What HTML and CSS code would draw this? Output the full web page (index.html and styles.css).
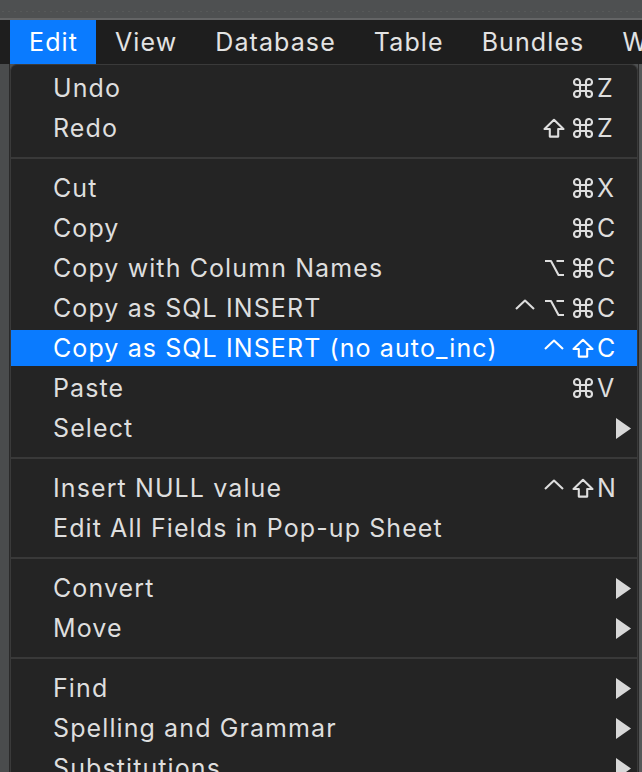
FILE: index.html
```html
<!DOCTYPE html>
<html>
<head>
<meta charset="utf-8">
<link rel="stylesheet" href="styles.css">
</head>
<body>
<svg class="defs" width="0" height="0" aria-hidden="true">
  <defs>
    <symbol id="cmd" viewBox="0 0 24 20"><path d="M15 4v12a3 3 0 1 0 3-3H6a3 3 0 1 0 3 3V4a3 3 0 1 0-3 3h12a3 3 0 1 0-3-3"/></symbol>
    <symbol id="shift" viewBox="0 0 24 20"><polygon points="12,1.8 21.5,11 16.2,11 16.2,18.6 7.8,18.6 7.8,11 2.5,11"/></symbol>
    <symbol id="opt" viewBox="0 0 24 20"><path d="M3 3h6l7.5 14H22M14.5 3H22"/></symbol>
    <symbol id="ctrl" viewBox="0 0 24 20"><path d="M3 11L12 2.5l9 8.5"/></symbol>
    <symbol id="arrow" viewBox="0 0 15 21"><polygon points="0,0 15,10.5 0,21"/></symbol>
  </defs>
</svg>
<div class="screen">
  <div class="titlebar"></div>
  <div class="menubar">
    <span class="mb-item active">Edit</span>
    <span class="mb-item">View</span>
    <span class="mb-item">Database</span>
    <span class="mb-item">Table</span>
    <span class="mb-item">Bundles</span>
    <span class="mb-item">Window</span>
  </div>
  <div class="stage">
    <div class="desk-left"></div>
    <div class="menu">
      <div class="item"><span class="label">Undo</span><span class="sc"><span class="mods"><svg class="mod"><use href="#cmd"/></svg></span><span class="key">Z</span></span></div>
      <div class="item"><span class="label">Redo</span><span class="sc"><span class="mods"><svg class="mod"><use href="#shift"/></svg><svg class="mod"><use href="#cmd"/></svg></span><span class="key">Z</span></span></div>
      <div class="sep"></div>
      <div class="item"><span class="label">Cut</span><span class="sc"><span class="mods"><svg class="mod"><use href="#cmd"/></svg></span><span class="key">X</span></span></div>
      <div class="item"><span class="label">Copy</span><span class="sc"><span class="mods"><svg class="mod"><use href="#cmd"/></svg></span><span class="key">C</span></span></div>
      <div class="item"><span class="label">Copy with Column Names</span><span class="sc"><span class="mods"><svg class="mod"><use href="#opt"/></svg><svg class="mod"><use href="#cmd"/></svg></span><span class="key">C</span></span></div>
      <div class="item"><span class="label">Copy as SQL INSERT</span><span class="sc"><span class="mods"><svg class="mod"><use href="#ctrl"/></svg><svg class="mod"><use href="#opt"/></svg><svg class="mod"><use href="#cmd"/></svg></span><span class="key">C</span></span></div>
      <div class="item hl"><span class="label">Copy as SQL INSERT (no auto_inc)</span><span class="sc"><span class="mods"><svg class="mod"><use href="#ctrl"/></svg><svg class="mod"><use href="#shift"/></svg></span><span class="key">C</span></span></div>
      <div class="item"><span class="label">Paste</span><span class="sc"><span class="mods"><svg class="mod"><use href="#cmd"/></svg></span><span class="key">V</span></span></div>
      <div class="item"><span class="label">Select</span><svg class="arrow"><use href="#arrow"/></svg></div>
      <div class="sep"></div>
      <div class="item"><span class="label">Insert NULL value</span><span class="sc"><span class="mods"><svg class="mod"><use href="#ctrl"/></svg><svg class="mod"><use href="#shift"/></svg></span><span class="key">N</span></span></div>
      <div class="item"><span class="label">Edit All Fields in Pop-up Sheet</span></div>
      <div class="sep"></div>
      <div class="item"><span class="label">Convert</span><svg class="arrow"><use href="#arrow"/></svg></div>
      <div class="item"><span class="label">Move</span><svg class="arrow"><use href="#arrow"/></svg></div>
      <div class="sep"></div>
      <div class="item"><span class="label">Find</span><svg class="arrow"><use href="#arrow"/></svg></div>
      <div class="item"><span class="label">Spelling and Grammar</span><svg class="arrow"><use href="#arrow"/></svg></div>
      <div class="item"><span class="label">Substitutions</span><svg class="arrow"><use href="#arrow"/></svg></div>
    </div>
    <div class="desk-right"></div>
  </div>
</div>
</body>
</html>
```
FILE: styles.css
```css
html, body {
  margin: 0;
  padding: 0;
  background: #4d4f50;
}
.defs {
  position: absolute;
  width: 0;
  height: 0;
  overflow: hidden;
}
.screen {
  width: 642px;
  height: 772px;
  overflow: hidden;
  display: flex;
  flex-direction: column;
  font-family: Inter, "Noto Sans", "DejaVu Sans", sans-serif;
}
.titlebar {
  height: 18px;
  flex-shrink: 0;
  background-color: #4e5051;
  background-image: radial-gradient(circle, #575959 0.8px, transparent 1px);
  background-size: 6px 5px;
  background-position: 0 9px;
  background-repeat: repeat-x;
  border-bottom: 2px solid #646566;
}
.menubar {
  height: 44px;
  flex-shrink: 0;
  background: #1e1e1e;
  display: flex;
  padding-left: 10px;
  white-space: nowrap;
  overflow: hidden;
}
.mb-item {
  padding: 0 19px 0 19px;
  line-height: 45px;
  font-size: 25px;
  letter-spacing: 1.1px;
  color: #e3e3e3;
}
.mb-item.active {
  padding-right: 18px;
  background: #0a7bff;
  color: #ffffff;
}
.stage {
  flex: 1;
  display: flex;
  min-height: 0;
}
.desk-left {
  width: 10px;
  flex-shrink: 0;
  background: #4a4c4d;
  box-shadow: inset -1px 0 0 #2a2a2a;
}
.desk-right {
  width: 4px;
  flex-shrink: 0;
  background: #555758;
  box-shadow: inset 1px 0 0 #2a2a2a;
}
.menu {
  flex: 1;
  background: #242424;
  border: 1px solid #3a3a3a;
  border-bottom: 0;
  border-radius: 7px 7px 0 0;
  padding-top: 3px;
  overflow: hidden;
}
.item {
  height: 40px;
  display: flex;
  align-items: center;
  padding: 0 6px 0 42px;
  font-size: 25px;
  letter-spacing: 1.1px;
  color: #dedede;
  white-space: nowrap;
}
.item.hl {
  height: 36px;
  margin: 2px 0;
  background: #0a7bff;
  color: #ffffff;
}
.label {
  flex: 1;
}
.sc {
  display: flex;
  align-items: center;
}
.mods {
  display: flex;
  align-items: center;
  gap: 5px;
  margin-right: 2px;
}
.mod {
  width: 24px;
  height: 20px;
  fill: none;
  stroke: currentColor;
  stroke-width: 2.1;
  stroke-linejoin: round;
  stroke-linecap: butt;
}
.key {
  width: 34px;
  letter-spacing: 0;
}
.arrow {
  width: 15px;
  height: 21px;
  fill: #d8d8d8;
}
.sep {
  height: 20px;
  display: flex;
  align-items: center;
}
.sep::before {
  content: "";
  flex: 1;
  height: 2px;
  background: #393939;
}
```
